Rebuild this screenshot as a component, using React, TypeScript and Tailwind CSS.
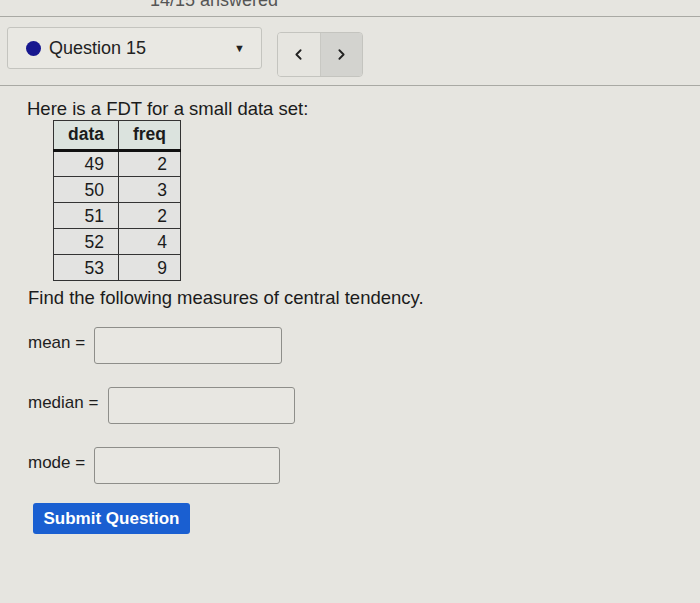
import { ChevronLeft, ChevronRight } from 'lucide-react'

const rows = [
  { data: 49, freq: 2 },
  { data: 50, freq: 3 },
  { data: 51, freq: 2 },
  { data: 52, freq: 4 },
  { data: 53, freq: 9 },
]

function AnswerField({ label, width, gap }: { label: string; width: string; gap: string }) {
  return (
    <div className="flex items-center">
      <span className={`text-[17px] text-[#1e1e1e] -mt-[6px] ${gap}`}>{label} =</span>
      <input
        type="text"
        className={`${width} h-[37px] rounded-[3px] border border-[#8e8e8a] bg-[#e8e7e2] outline-none`}
      />
    </div>
  )
}

export default function App() {
  return (
    <div
      className="w-[700px] h-[603px] overflow-hidden bg-[#e6e5e0] text-[#1b1b1b]"
      style={{ fontFamily: '"Liberation Sans", Arial, sans-serif' }}
    >
      {/* progress text, cut off by the top of the screen */}
      <div className="h-[10px] overflow-hidden pl-[150px]">
        <div className="-mt-[10px] text-[18px] leading-[20px] text-[#555]">14/15 answered</div>
      </div>
      <div className="mt-[6px] border-t border-[#a9a9a4]" />

      <div className="flex items-start pt-[10px] pl-[7px]">
        <div className="flex items-center w-[255px] h-[42px] rounded-[3px] border border-[#c4c4bf] bg-[#e9e8e3] pl-[18px] pr-[16px]">
          <span className="w-[15px] h-[15px] rounded-full bg-[#17178f]" />
          <span className="ml-[8px] text-[18px] text-[#222]">Question 15</span>
          <span className="ml-auto text-[11px] text-[#222]">▼</span>
        </div>
        <div className="ml-[15px] mt-[5px] flex w-[86px] h-[45px] rounded-[4px] border border-[#c4c4bf] overflow-hidden">
          <button className="flex-1 flex items-center justify-center bg-[#e6e5e0] border-r border-[#c8c8c3]">
            <ChevronLeft size={17} strokeWidth={2.6} className="text-[#222]" />
          </button>
          <button className="flex-1 flex items-center justify-center bg-[#d3d3cf]">
            <ChevronRight size={17} strokeWidth={2.6} className="text-[#222]" />
          </button>
        </div>
      </div>
      <div className="mt-[8px] border-t border-[#a9a9a4]" />

      <div className="pl-[27px] pt-[12px]">
        <p className="text-[18.5px] leading-[22px]">Here is a FDT for a small data set:</p>
        <table className="ml-[26px] border-collapse text-[17.5px]">
          <thead>
            <tr className="bg-[#dbe3de] h-[28px] border-b-[3px] border-[#111]">
              <th className="w-[65px] border border-[#333] font-bold text-center pb-[2px]">data</th>
              <th className="w-[62px] border border-[#333] font-bold text-center pb-[2px]">freq</th>
            </tr>
          </thead>
          <tbody>
            {rows.map((r) => (
              <tr key={r.data} className="h-[26px] bg-[#e3e3e1]">
                <td className="border border-[#333] text-right pr-[14px] leading-[20px]">{r.data}</td>
                <td className="border border-[#333] text-right pr-[13px] leading-[20px]">{r.freq}</td>
              </tr>
            ))}
          </tbody>
        </table>
        <p className="text-[18.5px] leading-[22px] mt-[6px] pl-[1px]">
          Find the following measures of central tendency.
        </p>

        <div className="mt-[18px] pl-[1px] flex flex-col gap-[23px]">
          <AnswerField label="mean" width="w-[188px]" gap="w-[66px]" />
          <AnswerField label="median" width="w-[187px]" gap="w-[80px]" />
          <AnswerField label="mode" width="w-[186px]" gap="w-[66px]" />
        </div>

        <button className="mt-[19px] ml-[6px] h-[31px] w-[157px] rounded-[3px] bg-[#1a5fd1] text-white text-[17px] font-bold">
          Submit Question
        </button>
      </div>
    </div>
  )
}
